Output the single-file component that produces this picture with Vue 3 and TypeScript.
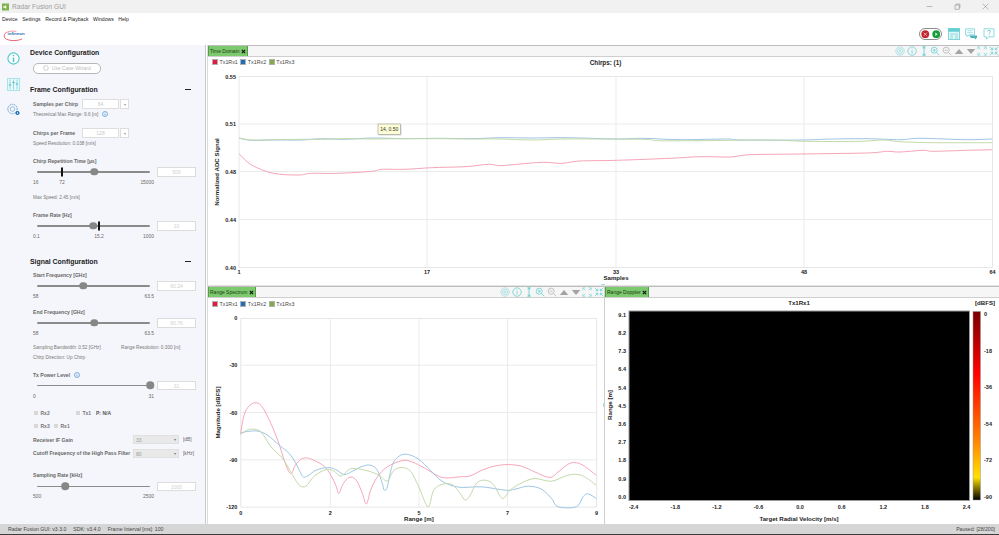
<script setup lang="ts">
interface Row {
  kind: 'head' | 'label' | 'note' | 'select' | 'slider' | 'pair' | 'checks' | 'unit' | 'wizard'
  mt: number
  text?: string
  text2?: string
  value?: string
  unit?: string
  info?: boolean
  collapse?: boolean
  thumb?: number
  marker?: number
  min?: string
  max?: string
  mid?: string
  checks?: { text: string; x: number }[]
  extra?: string
}

const rows: Row[] = [
  { kind: 'head', mt: 2, text: 'Device Configuration' },
  { kind: 'wizard', mt: 4, text: 'Use Case Wizard' },
  { kind: 'head', mt: 10, text: 'Frame Configuration', collapse: true },
  { kind: 'select', mt: 3.5, text: 'Samples per Chirp', value: '64' },
  { kind: 'note', mt: 2, text: 'Theoretical Max Range: 9.6 [m]', info: true },
  { kind: 'select', mt: 9, text: 'Chirps per Frame', value: '128' },
  { kind: 'note', mt: 2, text: 'Speed Resolution: 0.038 [m/s]' },
  { kind: 'label', mt: 9, text: 'Chirp Repetition Time [µs]' },
  { kind: 'slider', mt: 2, thumb: 94, marker: 62, value: '506', min: '16', mid: '72', max: '15000' },
  { kind: 'note', mt: 7, text: 'Max Speed: 2.45 [m/s]' },
  { kind: 'label', mt: 9, text: 'Frame Rate [Hz]' },
  { kind: 'slider', mt: 2, thumb: 93, marker: 99, value: '10', min: '0.1', mid: '15.2', max: '1000' },
  { kind: 'head', mt: 14.5, text: 'Signal Configuration', collapse: true },
  { kind: 'label', mt: 3.5, text: 'Start Frequency [GHz]' },
  { kind: 'slider', mt: 2, thumb: 83, value: '60.24', min: '58', max: '63.5' },
  { kind: 'label', mt: 7, text: 'End Frequency [GHz]' },
  { kind: 'slider', mt: 2, thumb: 94, value: '60.76', min: '58', max: '63.5' },
  { kind: 'pair', mt: 6, text: 'Sampling Bandwidth: 0.52 [GHz]', text2: 'Range Resolution: 0.300 [m]' },
  { kind: 'note', mt: 1.5, text: 'Chirp Direction: Up Chirp' },
  { kind: 'label', mt: 9, text: 'Tx Power Level', info: true },
  { kind: 'slider', mt: 2, thumb: 150, value: '31', min: '0', max: '31' },
  { kind: 'checks', mt: 8.7, checks: [{ text: 'Rx2', x: 1 }, { text: 'Tx1', x: 43 }], extra: 'P: N/A' },
  { kind: 'checks', mt: 5.3, checks: [{ text: 'Rx3', x: 1 }, { text: 'Rx1', x: 21 }] },
  { kind: 'unit', mt: 4.5, text: 'Receiver IF Gain', value: '33', unit: '[dB]' },
  { kind: 'unit', mt: 3.5, text: 'Cutoff Frequency of the High Pass Filter', value: '80', unit: '[kHz]' },
  { kind: 'label', mt: 12.7, text: 'Sampling Rate [kHz]' },
  { kind: 'slider', mt: 2.3, thumb: 65, value: '1000', min: '500', max: '2500' },
]

const menus = ['Device', 'Settings', 'Record & Playback', 'Windows', 'Help']

const ring = (x: number, y: number, r: number) =>
  `M${x - r} ${y}a${r} ${r} 0 1 0 ${r * 2} 0a${r} ${r} 0 1 0 ${-r * 2} 0`

const tools = [
  { d: ring(6, 6, 5) + ring(6, 6, 3) + ring(6, 6, 1), color: '#a5dfe2' },
  { d: ring(6, 6, 5) + 'M6 3v1.2M6 5.2V9', color: '#6fd0d6' },
  { d: 'M6 1v10M4 1h4M4 11h4M4.6 3L6 1.4L7.4 3M4.6 9L6 10.6L7.4 9', color: '#5fcbd2' },
  { d: ring(5, 5, 3.6) + 'M7.8 7.8L11 11M3.3 5h3.4M5 3.3v3.4', color: '#6fd0d6' },
  { d: ring(5, 5, 3.6) + 'M7.8 7.8L11 11M3.3 5h3.4', color: '#b8b8b8' },
  { d: 'M1 9.5L6 3.5L11 9.5z', color: '#a3a3a3', solid: true },
  { d: 'M1 3.5L6 9.5L11 3.5z', color: '#a3a3a3', solid: true },
  { d: 'M1 4V1H4M8 1h3V4M11 8v3H8M4 11H1V8M1.5 1.5L4 4M10.5 1.5L8 4M10.5 10.5L8 8M1.5 10.5L4 8', color: '#8fdade' },
  { d: 'M1 1L4.5 4.5M11 1L7.5 4.5M11 11L7.5 7.5M1 11L4.5 7.5M2 4.5h2.5V2M7.5 2v2.5H10M10 7.5H7.5V10M4.5 10V7.5H2', color: '#6fd0d6' },
]

const legend = [
  { name: 'Tx1Rx1', color: '#e8173f' },
  { name: 'Tx1Rx2', color: '#1e6fb8' },
  { name: 'Tx1Rx3', color: '#7fab4a' },
]

// points read off the 3x crops, mapped back to page pixels
type Pt = [number, number]
function smooth(pts: Pt[], ox: number, oy: number): string {
  const p = pts.map(([x, y]) => [ox + x / 3, oy + y / 3])
  let d = `M${p[0][0].toFixed(1)} ${p[0][1].toFixed(1)}`
  for (let i = 0; i < p.length - 1; i++) {
    const a = p[Math.max(i - 1, 0)]
    const b = p[i]
    const c = p[i + 1]
    const e = p[Math.min(i + 2, p.length - 1)]
    const c1 = [b[0] + (c[0] - a[0]) / 6, b[1] + (c[1] - a[1]) / 6]
    const c2 = [c[0] - (e[0] - b[0]) / 6, c[1] - (e[1] - b[1]) / 6]
    d += `C${c1[0].toFixed(1)} ${c1[1].toFixed(1)} ${c2[0].toFixed(1)} ${c2[1].toFixed(1)} ${c[0].toFixed(1)} ${c[1].toFixed(1)}`
  }
  return d
}
// left part comes from the crop at (205,40), right part from the crop at (500,55)
function line(left: Pt[], right: Pt[]): string {
  const shifted: Pt[] = left.map(([x, y]) => [x - 885, y - 45])
  return smooth([...shifted, ...right], 500, 55)
}

const timeLines = [
  {
    color: '#f6a4b8',
    d: line(
      [[103, 342], [140, 375], [205, 400], [280, 405], [320, 400], [400, 400], [500, 394], [530, 388], [600, 388], [680, 383], [780, 380], [850, 373]],
      [[0, 332], [60, 327], [130, 322], [185, 325], [240, 318], [350, 316], [510, 310], [600, 305], [690, 306], [750, 299], [900, 297], [1100, 294], [1160, 289], [1200, 291], [1270, 286], [1300, 289], [1400, 286], [1477, 284]],
    ),
  },
  {
    color: '#9cc5e4',
    d: line(
      [[103, 295], [140, 301], [205, 300], [290, 300], [350, 296], [420, 298], [500, 294], [600, 296], [700, 295], [800, 296]],
      [[0, 248], [100, 249], [200, 248], [350, 252], [430, 250], [540, 254], [680, 252], [720, 255], [900, 255], [1000, 252], [1100, 251], [1200, 254], [1260, 250], [1400, 254], [1477, 252]],
    ),
  },
  {
    color: '#c3d9a9',
    d: line(
      [[103, 294], [140, 300], [205, 299], [290, 298], [350, 298], [420, 296], [500, 297], [600, 296], [700, 296], [800, 297]],
      [[0, 252], [100, 255], [200, 252], [430, 253], [470, 257], [600, 257], [800, 255], [920, 259], [1080, 259], [1150, 255], [1200, 260], [1300, 263], [1477, 263]],
    ),
  },
]

const specLines = [
  {
    color: '#f6a4b8',
    d: smooth([[103, 130], [112, 80], [125, 50], [145, 37], [165, 45], [190, 90], [215, 150], [240, 225], [255, 250], [268, 225], [285, 207], [305, 203], [330, 213], [355, 228], [375, 255], [390, 285], [399, 310], [410, 285], [425, 265], [440, 261], [455, 275], [470, 310], [482, 342], [495, 300], [515, 260], [545, 230], [590, 211], [620, 215], [660, 235], [700, 258], [725, 263], [760, 260], [795, 257], [830, 240], [870, 227], [910, 223], [950, 228], [990, 245], [1035, 262], [1060, 245], [1090, 222], [1110, 217], [1135, 225], [1175, 255]], 205, 390),
  },
  {
    color: '#9cc5e4',
    d: smooth([[103, 128], [125, 123], [155, 122], [185, 135], [220, 165], [250, 190], [270, 220], [290, 258], [305, 257], [330, 240], [365, 232], [390, 238], [415, 253], [440, 243], [470, 228], [495, 225], [515, 240], [530, 280], [536, 300], [545, 290], [560, 225], [580, 198], [605, 192], [640, 207], [675, 240], [710, 273], [760, 291], [830, 290], [900, 300], [930, 297], [970, 288], [1010, 297], [1040, 325], [1060, 350], [1115, 350], [1135, 320], [1150, 311], [1175, 325]], 205, 390),
  },
  {
    color: '#c3d9a9',
    d: smooth([[103, 132], [120, 120], [140, 116], [165, 125], [195, 170], [230, 205], [260, 255], [280, 285], [300, 288], [325, 258], [360, 238], [385, 243], [405, 258], [430, 238], [450, 235], [490, 243], [520, 255], [545, 272], [565, 240], [590, 232], [615, 243], [640, 290], [668, 350], [685, 300], [710, 283], [740, 283], [765, 310], [780, 330], [795, 315], [815, 278], [840, 270], [865, 283], [892, 325], [915, 300], [950, 278], [990, 265], [1040, 273], [1090, 255], [1130, 255], [1175, 285]], 205, 390),
  },
]

const timeY = [
  { t: '0.55', y: 77 },
  { t: '0.51', y: 124 },
  { t: '0.48', y: 171.5 },
  { t: '0.44', y: 219.5 },
  { t: '0.40', y: 267.5 },
]
const timeX = [
  { t: '1', x: 239 },
  { t: '17', x: 427 },
  { t: '33', x: 616 },
  { t: '48', x: 804 },
  { t: '64', x: 992.5 },
]
const specY = [
  { t: '0', y: 317.5 },
  { t: '-30', y: 364.5 },
  { t: '-60', y: 412 },
  { t: '-90', y: 459.5 },
  { t: '-120', y: 507 },
]
const specX = [
  { t: '0', x: 239.5 },
  { t: '2', x: 329.5 },
  { t: '5', x: 418.5 },
  { t: '7', x: 507.5 },
  { t: '9', x: 597 },
]
const dopY = ['9.1', '8.2', '7.3', '6.4', '5.4', '4.5', '3.6', '2.7', '1.8', '0.9', '0.0']
const dopX = ['-2.4', '-1.8', '-1.2', '-0.6', '0.0', '0.6', '1.2', '1.8', '2.4']
const barTicks = ['0', '-18', '-36', '-54', '-72', '-90']
</script>

<template>
  <div class="app">
    <header class="titlebar">
      <svg class="app-icon" viewBox="0 0 10 10">
        <rect width="10" height="10" fill="#7fb24a" />
        <path d="M2 4h2l2-2v6L4 6H2z" fill="#fff" />
      </svg>
      <span class="title">Radar Fusion GUI</span>
      <div class="win-btns">
        <svg viewBox="0 0 10 10"><path d="M1 5h8" /></svg>
        <svg viewBox="0 0 10 10"><path d="M1.5 3h6v6h-6zM3 3V1.5h5.5V7H7.5" /></svg>
        <svg viewBox="0 0 10 10"><path d="M1 1l8 8M9 1l-8 8" /></svg>
      </div>
    </header>

    <nav class="menubar">
      <span v-for="m in menus" :key="m">{{ m }}</span>
    </nav>

    <div class="toolbar">
      <div class="logo">
        <svg viewBox="0 0 22 12">
          <path d="M3 2.5C.5 4.5 .5 8 4 9.5c4 1.7 11 2 16-.5" fill="none" stroke="#e2324f" stroke-width="0.8" />
          <path d="M3 2.5C6 .8 11 .6 14 1.2" fill="none" stroke="#e2324f" stroke-width="0.5" />
        </svg>
        <span>infineon</span>
      </div>
      <div class="top-actions">
        <div class="pill">
          <svg viewBox="0 0 10 10"><circle cx="5" cy="5" r="4.6" fill="#c4262e" /><path d="M3.2 3.2l3.6 3.6M6.8 3.2l-3.6 3.6" stroke="#f3d5d5" stroke-width="0.9" /></svg>
          <svg viewBox="0 0 10 10"><circle cx="5" cy="5" r="4.6" fill="#169c3a" /><path d="M3.8 2.8l3 2.2-3 2.2z" fill="#d8f2d8" /></svg>
        </div>
        <svg class="top-icon" viewBox="0 0 12 12">
          <rect x="0.5" y="0.5" width="11" height="11" fill="#e2f6f7" stroke="#7fd6da" />
          <rect x="0.5" y="0.5" width="11" height="3.2" fill="#62cdd2" />
          <path d="M2 6h8M2 8h3M7 8h3M2 10h3M7 10h3" stroke="#7fd6da" stroke-width="0.8" />
        </svg>
        <svg class="top-icon chat" viewBox="0 0 13 12">
          <path d="M.5.8h9v6H4L2 8.6V6.8H.5z" fill="#fff" stroke="#7fd6da" stroke-width="0.9" />
          <path d="M4 7.5h8v2.6h-1v1.6L9.3 10.1H6" fill="#4db4bb" />
          <path d="M2.2 2.8h5.5M2.2 4.6h5.5" stroke="#7fd6da" stroke-width="0.7" />
        </svg>
        <svg class="top-icon" viewBox="0 0 12 12">
          <path d="M1 .8h10v8H6L3.5 11V8.8H1z" fill="#fff" stroke="#7fd6da" stroke-width="0.9" />
          <path d="M4.7 3.4c.2-1.4 2.7-1.4 2.7.1 0 1-1.3 1-1.3 2M6.1 6.3v.9" fill="none" stroke="#4db4bb" stroke-width="0.8" />
        </svg>
      </div>
    </div>

    <main class="main">
      <aside class="sidebar">
        <div class="rail">
          <svg viewBox="0 0 13 13">
            <circle cx="6.5" cy="6.5" r="5.6" fill="#fff" stroke="#4fc8ce" stroke-width="1.1" />
            <path d="M6.5 3v1.3M6.5 5.4V10" stroke="#4fc8ce" stroke-width="1.5" />
          </svg>
          <svg viewBox="0 0 13 13">
            <rect x="0.5" y="0.5" width="12" height="12" fill="#ecf9fa" stroke="#a8e4e7" />
            <path d="M3 1.5v10M6.5 1.5v10M10 1.5v10" stroke="#7fd6da" stroke-width="0.9" />
            <path d="M1.8 7h2.4M5.3 4.5h2.4M8.8 6h2.4" stroke="#49bcc4" stroke-width="1.2" />
          </svg>
          <svg viewBox="0 0 13 13">
            <circle cx="5.5" cy="6" r="4.7" fill="none" stroke="#6fa5d6" stroke-width="1" stroke-dasharray="1.5 0.6" />
            <circle cx="5.5" cy="6" r="2.3" fill="none" stroke="#8dbae0" stroke-width="0.9" />
            <circle cx="10.5" cy="10" r="2.1" fill="#1f6fb4" />
            <path d="M10.5 9v2" stroke="#fff" stroke-width="0.7" />
          </svg>
        </div>

        <div class="form">
          <template v-for="(row, i) in rows" :key="i">
            <div v-if="row.kind === 'head'" class="head" :style="{ marginTop: row.mt + 'px' }">
              <span>{{ row.text }}</span>
              <i v-if="row.collapse" class="minus"></i>
            </div>

            <button v-else-if="row.kind === 'wizard'" class="wizard" :style="{ marginTop: row.mt + 'px' }" disabled>
              <svg viewBox="0 0 8 8">
                <circle cx="4" cy="4" r="3" fill="none" stroke="#c4c4c4" stroke-width="1.4" stroke-dasharray="1.2 0.5" />
              </svg>
              {{ row.text }}
            </button>

            <div v-else-if="row.kind === 'label'" class="label" :style="{ marginTop: row.mt + 'px' }">
              {{ row.text }}
              <svg v-if="row.info" class="info" viewBox="0 0 6 6"><circle cx="3" cy="3" r="2.5" fill="none" stroke="#4a8fd0" stroke-width="0.7" /><path d="M3 1.6v.6M3 2.7v1.8" stroke="#4a8fd0" stroke-width="0.7" /></svg>
            </div>

            <div v-else-if="row.kind === 'note'" class="note" :style="{ marginTop: row.mt + 'px' }">
              {{ row.text }}
              <svg v-if="row.info" class="info" viewBox="0 0 6 6"><circle cx="3" cy="3" r="2.5" fill="none" stroke="#4a8fd0" stroke-width="0.7" /><path d="M3 1.6v.6M3 2.7v1.8" stroke="#4a8fd0" stroke-width="0.7" /></svg>
            </div>

            <div v-else-if="row.kind === 'pair'" class="note pair" :style="{ marginTop: row.mt + 'px' }">
              <span>{{ row.text }}</span>
              <span>{{ row.text2 }}</span>
            </div>

            <div v-else-if="row.kind === 'select'" class="select-row" :style="{ marginTop: row.mt + 'px' }">
              <span class="label-text">{{ row.text }}</span>
              <div class="combo">
                <span class="combo-val">{{ row.value }}</span>
                <span class="combo-arrow">▾</span>
              </div>
            </div>

            <div v-else-if="row.kind === 'unit'" class="unit-row" :style="{ marginTop: row.mt + 'px' }">
              <span class="label-text">{{ row.text }}</span>
              <div class="drop">
                <span>{{ row.value }}</span>
                <span class="drop-arrow">▾</span>
              </div>
              <span class="unit">{{ row.unit }}</span>
            </div>

            <div v-else-if="row.kind === 'checks'" class="checks" :style="{ marginTop: row.mt + 'px' }">
              <div v-for="c in row.checks" :key="c.text" class="check" :style="{ left: c.x + 'px' }">
                <i></i>{{ c.text }}
              </div>
              <b v-if="row.extra" class="extra">{{ row.extra }}</b>
            </div>

            <template v-else-if="row.kind === 'slider'">
              <div class="slider-row" :style="{ marginTop: row.mt + 'px' }">
                <div class="track">
                  <i v-if="row.marker" class="marker" :style="{ left: row.marker! - 37 + 'px' }"></i>
                  <i class="thumb" :style="{ left: row.thumb! - 37 + 'px' }"></i>
                </div>
                <div class="num">{{ row.value }}</div>
              </div>
              <div class="ticks">
                <span>{{ row.min }}</span>
                <span v-if="row.mid" class="mid" :style="{ left: row.marker! - 33 + 'px' }">{{ row.mid }}</span>
                <span>{{ row.max }}</span>
              </div>
            </template>
          </template>
        </div>
      </aside>

      <section class="plots">
        <div class="panel time">
          <div class="tabbar">
            <div class="tab">Time Domain <svg viewBox="0 0 6 6"><path d="M1 1l4 4M5 1L1 5" /></svg></div>
            <div class="tools">
              <svg v-for="(t, k) in tools" :key="k" viewBox="0 0 12 12">
                <path :d="t.d" :fill="t.solid ? t.color : 'none'" :stroke="t.solid ? 'none' : t.color" stroke-width="1" />
              </svg>
            </div>
          </div>
          <div class="legend">
            <div class="keys">
              <span v-for="l in legend" :key="l.name" class="key"><i :style="{ background: l.color }"></i>{{ l.name }}</span>
            </div>
            <b class="chart-title">Chirps: (1)</b>
          </div>
          <svg class="chart" viewBox="208 67 791 218">
            <path d="M239 76.5H992.5V267.5H239z" fill="#fff" stroke="#e6e6e6" />
            <path v-for="t in timeY.slice(1, 4)" :key="t.t" :d="`M239 ${t.y}H992.5`" stroke="#ebebeb" />
            <path v-for="t in timeX.slice(1, 4)" :key="t.t" :d="`M${t.x} 76.5V267.5`" stroke="#ebebeb" />
            <path v-for="l in timeLines" :key="l.color" :d="l.d" fill="none" :stroke="l.color" stroke-width="1" />
            <text v-for="t in timeY" :key="t.t" x="236" :y="t.y + 2" text-anchor="end" class="tick">{{ t.t }}</text>
            <text v-for="t in timeX" :key="t.t" :x="t.x" y="274" text-anchor="middle" class="tick">{{ t.t }}</text>
            <text x="616" y="280" text-anchor="middle" class="axis">Samples</text>
            <text transform="translate(218.5 172) rotate(-90)" text-anchor="middle" class="axis">Normalized ADC Signal</text>
            <rect x="379" y="125" width="22.5" height="10.5" fill="#d8d8d8" />
            <rect x="378" y="124" width="22.5" height="10.5" fill="#fdfdd6" stroke="#9a9a9a" stroke-width="0.6" />
            <text x="389.2" y="131" text-anchor="middle" class="tip">14, 0.50</text>
          </svg>
        </div>

        <div class="bottom">
          <i class="grip grip-h"></i>
          <i class="grip grip-v"></i>
          <div class="panel spectrum">
            <div class="tabbar">
              <div class="tab">Range Spectrum <svg viewBox="0 0 6 6"><path d="M1 1l4 4M5 1L1 5" /></svg></div>
              <div class="tools">
                <svg v-for="(t, k) in tools" :key="k" viewBox="0 0 12 12">
                  <path :d="t.d" :fill="t.solid ? t.color : 'none'" :stroke="t.solid ? 'none' : t.color" stroke-width="1" />
                </svg>
              </div>
            </div>
            <div class="legend">
              <div class="keys">
                <span v-for="l in legend" :key="l.name" class="key"><i :style="{ background: l.color }"></i>{{ l.name }}</span>
              </div>
            </div>
            <svg class="chart" viewBox="208 308 395 216">
              <path d="M239.5 317.5H597V507H239.5z" fill="#fff" stroke="#e6e6e6" />
              <path v-for="t in specY.slice(1, 4)" :key="t.t" :d="`M239.5 ${t.y}H597`" stroke="#ebebeb" />
              <path v-for="t in specX.slice(1, 4)" :key="t.t" :d="`M${t.x} 317.5V507`" stroke="#ebebeb" />
              <path v-for="l in specLines" :key="l.color" :d="l.d" fill="none" :stroke="l.color" stroke-width="1" />
              <text v-for="t in specY" :key="t.t" x="236" :y="t.y + 2" text-anchor="end" class="tick">{{ t.t }}</text>
              <text v-for="t in specX" :key="t.t" :x="t.x" y="514.5" text-anchor="middle" class="tick">{{ t.t }}</text>
              <text x="418.5" y="521" text-anchor="middle" class="axis">Range [m]</text>
              <text transform="translate(218.5 412) rotate(-90)" text-anchor="middle" class="axis">Magnitude [dBFS]</text>
            </svg>
          </div>

          <div class="panel doppler">
            <div class="tabbar">
              <div class="tab">Range Doppler <svg viewBox="0 0 6 6"><path d="M1 1l4 4M5 1L1 5" /></svg></div>
            </div>
            <svg class="chart" viewBox="605 298 394 226">
              <defs>
                <linearGradient id="heat" x1="0" y1="0" x2="0" y2="1">
                  <stop offset="0" stop-color="#7a0000" />
                  <stop offset="0.33" stop-color="#ff0000" />
                  <stop offset="0.66" stop-color="#ff7a00" />
                  <stop offset="0.88" stop-color="#ffe000" />
                  <stop offset="1" stop-color="#000" />
                </linearGradient>
              </defs>
              <text x="799" y="304.5" text-anchor="middle" class="axis">Tx1Rx1</text>
              <text x="985" y="304.5" text-anchor="middle" class="axis">[dBFS]</text>
              <rect x="629" y="311" width="340.5" height="189.5" fill="#000" stroke="#999" stroke-width="1" />
              <rect x="973" y="311.5" width="7.5" height="188.5" fill="url(#heat)" stroke="#999" stroke-width="0.5" />
              <text v-for="(t, k) in dopY" :key="t" x="626" :y="316.8 + k * 18.2" text-anchor="end" class="tick">{{ t }}</text>
              <text v-for="(t, k) in dopX" :key="t + k" :x="633.7 + k * 41.6" y="508.6" text-anchor="middle" class="tick">{{ t }}</text>
              <text v-for="(t, k) in barTicks" :key="t" x="984" :y="316 + k * 36.6" class="tick">{{ t }}</text>
              <text x="799" y="521" text-anchor="middle" class="axis">Target Radial Velocity [m/s]</text>
              <text transform="translate(612 405) rotate(-90)" text-anchor="middle" class="axis">Range [m]</text>
            </svg>
          </div>
        </div>
      </section>
    </main>

    <footer class="status">
      <span>Radar Fusion GUI: v3.3.0</span>
      <span>SDK: v3.4.0</span>
      <span>Frame Interval [ms]: 100</span>
      <span class="paused">Paused: [28/200]</span>
    </footer>
  </div>
</template>

<style scoped>
.app {
  width: 999px;
  height: 535px;
  display: flex;
  flex-direction: column;
  overflow: hidden;
  background: #fff;
  font-family: 'Liberation Sans', Arial, sans-serif;
  color: #333;
}

.titlebar {
  height: 13px;
  flex: none;
  display: flex;
  align-items: center;
  background: #f1f1f1;
  padding-left: 2px;
}
.app-icon {
  width: 7px;
  height: 8px;
}
.title {
  margin-left: 3px;
  font-size: 6.5px;
  color: #9a9a9a;
  letter-spacing: 0.1px;
}
.win-btns {
  margin-left: auto;
  display: flex;
  gap: 21px;
  padding-right: 10px;
}
.win-btns svg {
  width: 7px;
  height: 7px;
}
.win-btns path {
  fill: none;
  stroke: #8a8a8a;
  stroke-width: 0.8;
}

.menubar {
  height: 11px;
  flex: none;
  display: flex;
  align-items: center;
  gap: 4.6px;
  padding-left: 2px;
  font-size: 5.1px;
  background: #fff;
  color: #222;
}

.toolbar {
  height: 21px;
  flex: none;
  display: flex;
  align-items: center;
  justify-content: space-between;
  background: #fff;
  padding: 0 4px 0 3px;
}
.logo {
  position: relative;
  width: 21px;
  height: 12px;
  margin-top: -1px;
}
.logo svg {
  width: 100%;
  height: 100%;
}
.logo span {
  position: absolute;
  left: 4.5px;
  top: 3px;
  font-size: 4.4px;
  font-weight: 700;
  line-height: 5px;
  color: #2a6fb3;
}
.top-actions {
  display: flex;
  align-items: center;
  margin-top: -1px;
}
.pill {
  width: 23px;
  height: 12px;
  box-sizing: border-box;
  border: 1px solid #8c8c8c;
  border-radius: 6px;
  display: flex;
  align-items: center;
  justify-content: center;
  gap: 2px;
  margin-right: 6px;
}
.pill svg {
  width: 8.5px;
  height: 8.5px;
}
.top-icon {
  width: 12px;
  height: 12px;
  margin-right: 5px;
}
.top-icon:last-child {
  margin-right: 0;
}
.chat {
  width: 13px;
}

.main {
  flex: 1;
  min-height: 0;
  display: flex;
}

.sidebar {
  width: 205px;
  flex: none;
  display: flex;
  background: #f5f6fb;
  border-right: 1px solid #c9c9c9;
  box-sizing: content-box;
  overflow: hidden;
}
.rail {
  width: 30px;
  flex: none;
  box-sizing: border-box;
  display: flex;
  flex-direction: column;
  padding: 7px 0 0 6.5px;
  gap: 12.5px;
}
.rail svg {
  width: 13px;
  height: 13px;
}
.form {
  flex: 1;
  min-width: 0;
}
.head {
  height: 12px;
  line-height: 12px;
  font-size: 6.9px;
  font-weight: 700;
  color: #1c1c1c;
  display: flex;
  align-items: center;
  justify-content: space-between;
  padding-right: 14px;
}
.minus {
  width: 6px;
  height: 1.4px;
  background: #222;
}
.wizard {
  display: flex;
  align-items: center;
  justify-content: center;
  gap: 3px;
  margin-left: 3px;
  width: 67.5px;
  height: 10.5px;
  padding: 0;
  background: #fff;
  border: 0.8px solid #b8b8b8;
  border-radius: 5px;
  font-family: inherit;
  font-size: 5px;
  color: #bdbdbd;
}
.wizard svg {
  width: 6px;
  height: 6px;
}
.label,
.note,
.pair {
  margin-left: 3px;
  height: 8px;
  line-height: 8px;
  white-space: nowrap;
}
.label,
.label-text {
  font-size: 5.1px;
  font-weight: 700;
  color: #666;
}
.note {
  font-size: 4.7px;
  color: #777;
}
.pair {
  display: flex;
}
.pair span:first-child {
  width: 88px;
}
.info {
  width: 6px;
  height: 6px;
  margin-left: 2px;
  vertical-align: -1px;
}
.select-row,
.unit-row {
  margin-left: 3px;
  height: 10px;
  display: flex;
  align-items: center;
  white-space: nowrap;
}
.combo {
  position: absolute;
  display: flex;
  width: 47px;
  height: 10px;
  margin-left: 49px;
  box-sizing: border-box;
  font-size: 5px;
  color: #c8c8c8;
}
.combo-val {
  flex: 1;
  background: #fff;
  border: 0.6px solid #dedede;
  text-align: center;
  line-height: 9px;
}
.combo-arrow {
  width: 7px;
  margin-left: 1px;
  background: #fff;
  border: 0.6px solid #dedede;
  text-align: center;
  line-height: 9px;
  color: #999;
  font-size: 4px;
}
.unit-row {
  position: relative;
}
.drop {
  position: absolute;
  left: 100px;
  top: 0.5px;
  width: 46px;
  height: 9px;
  box-sizing: border-box;
  padding: 0 2px;
  display: flex;
  justify-content: space-between;
  background: #e9e9e9;
  border: 0.6px solid #e0e0e0;
  font-size: 5px;
  line-height: 8px;
  color: #9a9a9a;
}
.drop-arrow {
  font-size: 4px;
  color: #777;
}
.unit {
  position: absolute;
  left: 150px;
  font-size: 4.9px;
  color: #666;
}
.slider-row {
  height: 10px;
  display: flex;
  align-items: center;
  padding-left: 7px;
}
.track {
  position: relative;
  width: 113px;
  height: 1.8px;
  background: #8b8b8b;
  border-radius: 1px;
}
.thumb {
  position: absolute;
  top: 50%;
  width: 7.5px;
  height: 7.5px;
  border-radius: 50%;
  background: #878787;
  transform: translate(-50%, -50%);
}
.marker {
  position: absolute;
  top: 50%;
  width: 2px;
  height: 9px;
  background: #111;
  transform: translate(-50%, -50%);
}
.num {
  width: 39px;
  height: 9.5px;
  box-sizing: border-box;
  margin-left: 7px;
  background: #fff;
  border: 0.6px solid #dcdcdc;
  font-size: 5px;
  line-height: 8.5px;
  text-align: center;
  color: #cfcfcf;
}
.ticks {
  position: relative;
  width: 121px;
  height: 8px;
  margin: 2px 0 0 3px;
  line-height: 8px;
  font-size: 4.9px;
  color: #666;
  display: flex;
  justify-content: space-between;
}
.mid {
  position: absolute;
  transform: translateX(-50%);
}
.checks {
  position: relative;
  height: 8px;
  margin-left: 3px;
  line-height: 8px;
  font-size: 5px;
  font-weight: 700;
  color: #777;
}
.check {
  position: absolute;
  top: 0;
  display: flex;
  align-items: center;
}
.check i {
  width: 4px;
  height: 4px;
  margin-right: 2.5px;
  background: #d8d8d8;
}
.extra {
  position: absolute;
  left: 63px;
  color: #555;
}

.plots {
  flex: 1;
  min-width: 0;
  display: flex;
  flex-direction: column;
  margin-left: 1px;
}
.panel {
  display: flex;
  flex-direction: column;
  min-width: 0;
  background: #fff;
  border-left: 1px solid #dcdcdc;
}
.time {
  height: 240px;
  flex: none;
}
.bottom {
  position: relative;
  flex: 1;
  min-height: 0;
  display: flex;
  padding-top: 1px;
  background: #e4e4e4;
}
.grip {
  position: absolute;
  background: #9fe0e3;
}
.grip-h {
  left: 394px;
  top: -1px;
  width: 4px;
  height: 1px;
}
.grip-v {
  left: 396px;
  top: 118px;
  width: 1px;
  height: 4px;
}
.spectrum {
  width: 396px;
  flex: none;
}
.doppler {
  flex: 1;
  margin-left: 0;
  border-left-color: #cfcfcf;
}
.tabbar {
  height: 12px;
  flex: none;
  box-sizing: border-box;
  display: flex;
  align-items: stretch;
  justify-content: space-between;
  background: #f6f6f6;
  border-top: 1px solid #bdbdbd;
  border-bottom: 1px solid #cfcfcf;
}
.tab {
  display: flex;
  align-items: center;
  gap: 1.5px;
  padding: 0 1px;
  background: #7dc96d;
  border: 1px solid #52a043;
  border-width: 0 1px;
  font-size: 5px;
  color: #1d3a16;
  white-space: nowrap;
}
.tab svg {
  width: 5px;
  height: 5px;
}
.tab path {
  fill: none;
  stroke: #111;
  stroke-width: 1.4;
}
.tools {
  display: flex;
  align-items: center;
  gap: 1.6px;
}
.tools svg {
  width: 10.1px;
  height: 10.1px;
}
.legend {
  height: 10px;
  flex: none;
  display: grid;
  grid-template-columns: 1fr auto 1fr;
  align-items: center;
  padding-left: 4px;
}
.spectrum .legend {
  height: 11px;
}
.keys {
  display: flex;
  gap: 2.6px;
}
.key {
  display: flex;
  align-items: center;
  font-size: 5.3px;
  color: #444;
}
.key i {
  width: 4px;
  height: 4px;
  margin-right: 1.5px;
  border: 0.5px solid #b0b0b0;
}
.chart-title {
  font-size: 6.3px;
  color: #222;
}
.chart {
  flex: 1;
  min-height: 0;
  width: 100%;
  display: block;
}
.tick {
  font-size: 5.5px;
  font-weight: 700;
  fill: #222;
}
.axis {
  font-size: 6.1px;
  font-weight: 700;
  fill: #222;
}
.tip {
  font-size: 5px;
  fill: #333;
}

.status {
  height: 10px;
  flex: none;
  display: flex;
  align-items: center;
  gap: 7px;
  padding: 0 4px 0 8px;
  background: #d6d6d6;
  border-bottom: 1px solid #3c3c3c;
  font-size: 5.15px;
  color: #444;
}
.paused {
  margin-left: auto;
}
</style>

<style>
html,
body {
  margin: 0;
  background: #fff;
}
</style>
